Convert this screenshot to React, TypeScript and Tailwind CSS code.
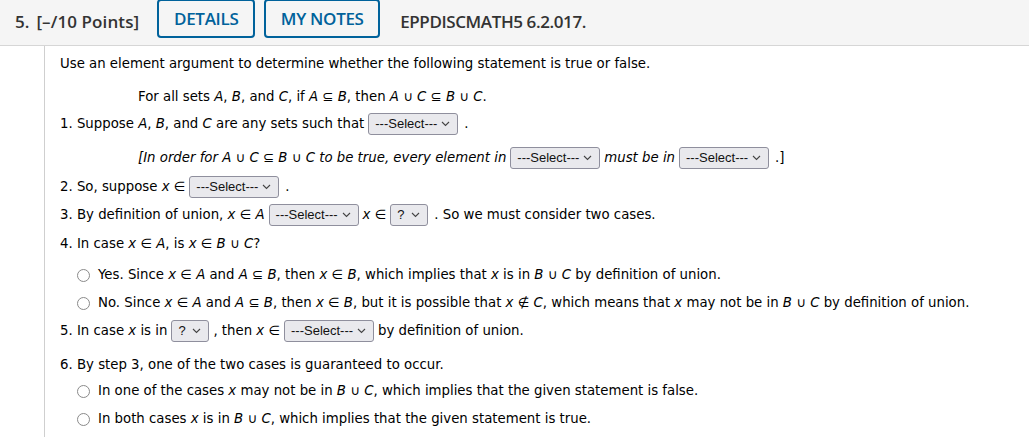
import React from "react";

function Sel({ label, w }: { label: string; w: string }) {
  return (
    <span
      className={`inline-flex items-center justify-between h-[22px] ${w} mx-[4px] pl-[6px] pr-[5px] rounded-[3px] border border-[#8f8f9d] bg-[#e9e9ed] text-[13px] text-[#111] align-middle`}
      style={{ fontFamily: "'Liberation Sans', Arial, sans-serif" }}
    >
      <span>{label}</span>
      <svg width="9" height="6" viewBox="0 0 9 6" className="mr-[2px]">
        <path d="M1 1l3.5 3.5L8 1" fill="none" stroke="#444" strokeWidth="1.1" />
      </svg>
    </span>
  );
}

function Radio() {
  return (
    <span className="inline-block w-[13px] h-[13px] rounded-full border-[1.5px] border-[#8a8a8a] bg-white mr-[8px] align-middle" />
  );
}

const I = ({ children }: { children: React.ReactNode }) => <i>{children}</i>;

export default function App() {
  return (
    <div className="w-[1029px] h-[437px] bg-white overflow-hidden text-[#222]">
      {/* header */}
      <div
        className="h-[47px] bg-[#f5f5f5] border-b border-[#d6d6d6] flex items-center pl-[15px] -mt-px"
        style={{ fontFamily: "'Open Sans', sans-serif" }}
      >
        <span className="text-[17px] font-semibold text-[#333]">5.</span>
        <span className="ml-[7px] text-[17px] font-semibold text-[#333] tracking-[0.1px]">[–/10 Points]</span>
        <div className="ml-[18px] h-[39px] w-[98px] -mt-[7px] border-2 border-[#00629b] rounded-[4px] flex items-center justify-center text-[17px] font-semibold text-[#00629b] tracking-[-0.3px]">
          DETAILS
        </div>
        <div className="ml-[9px] h-[39px] w-[116px] -mt-[7px] border-2 border-[#00629b] rounded-[4px] flex items-center justify-center text-[17px] font-semibold text-[#00629b] tracking-[-0.3px]">
          MY NOTES
        </div>
        <span className="ml-[20px] text-[17px] font-semibold text-[#333] tracking-[-0.4px]">
          EPPDISCMATH5 6.2.017.
        </span>
      </div>

      {/* body */}
      <div className="ml-[44px] border-l border-[#cfcfcf] pl-[15px] pt-[3px] h-[400px] text-[13.3px] text-black" style={{ fontFamily: "'DejaVu Sans', Verdana, sans-serif" }}>
        <div className="h-[22px] leading-[22px] mt-[4px]">
          Use an element argument to determine whether the following statement is true or false.
        </div>
        <div className="h-[22px] leading-[22px] mt-[11px] pl-[78px]">
          For all sets <I>A</I>, <I>B</I>, and <I>C</I>, if <I>A</I> ⊆ <I>B</I>, then <I>A</I> ∪ <I>C</I> ⊆ <I>B</I> ∪ <I>C</I>.
        </div>
        <div className="h-[22px] leading-[22px] mt-[5px] flex items-center">
          <span>
            1. Suppose <I>A</I>, <I>B</I>, and <I>C</I> are any sets such that
          </span>
          <Sel label="---Select---" w="w-[90px]" />
          <span className="ml-[2px]">.</span>
        </div>
        <div className="h-[22px] leading-[22px] mt-[12px] pl-[78px] flex items-center">
          <I>[In order for A ∪ C ⊆ B ∪ C to be true, every element in</I>
          <Sel label="---Select---" w="w-[90px]" />
          <I>must be in</I>
          <Sel label="---Select---" w="w-[90px]" />
          <span className="ml-[2px]">.]</span>
        </div>
        <div className="h-[22px] leading-[22px] mt-[7px] flex items-center">
          <span>
            2. So, suppose <I>x</I> ∈
          </span>
          <Sel label="---Select---" w="w-[90px]" />
          <span className="ml-[2px]">.</span>
        </div>
        <div className="h-[22px] leading-[22px] mt-[6px] flex items-center">
          <span>
            3. By definition of union, <I>x</I> ∈ <I>A</I>
          </span>
          <Sel label="---Select---" w="w-[90px]" />
          <span>
            <I>x</I> ∈
          </span>
          <Sel label="?" w="w-[38px]" />
          <span className="ml-[2px]">. So we must consider two cases.</span>
        </div>
        <div className="h-[22px] leading-[22px] mt-[7px]">
          4. In case <I>x</I> ∈ <I>A</I>, is <I>x</I> ∈ <I>B</I> ∪ <I>C</I>?
        </div>
        <div className="h-[22px] leading-[22px] mt-[9px] pl-[17px] flex items-center">
          <Radio />
          <span>
            Yes. Since <I>x</I> ∈ <I>A</I> and <I>A</I> ⊆ <I>B</I>, then <I>x</I> ∈ <I>B</I>, which implies that <I>x</I> is in <I>B</I> ∪ <I>C</I> by definition of union.
          </span>
        </div>
        <div className="h-[22px] leading-[22px] mt-[6px] pl-[17px] flex items-center">
          <Radio />
          <span>
            No. Since <I>x</I> ∈ <I>A</I> and <I>A</I> ⊆ <I>B</I>, then <I>x</I> ∈ <I>B</I>, but it is possible that <I>x</I> ∉ <I>C</I>, which means that <I>x</I> may not be in <I>B</I> ∪ <I>C</I> by definition of union.
          </span>
        </div>
        <div className="h-[22px] leading-[22px] mt-[6px] flex items-center">
          <span>
            5. In case <I>x</I> is in
          </span>
          <Sel label="?" w="w-[38px]" />
          <span>
            , then <I>x</I> ∈
          </span>
          <Sel label="---Select---" w="w-[90px]" />
          <span>by definition of union.</span>
        </div>
        <div className="h-[22px] leading-[22px] mt-[12px]">
          6. By step 3, one of the two cases is guaranteed to occur.
        </div>
        <div className="h-[22px] leading-[22px] mt-[4px] pl-[17px] flex items-center">
          <Radio />
          <span>
            In one of the cases <I>x</I> may not be in <I>B</I> ∪ <I>C</I>, which implies that the given statement is false.
          </span>
        </div>
        <div className="h-[22px] leading-[22px] mt-[6px] pl-[17px] flex items-center">
          <Radio />
          <span>
            In both cases <I>x</I> is in <I>B</I> ∪ <I>C</I>, which implies that the given statement is true.
          </span>
        </div>
      </div>
    </div>
  );
}
